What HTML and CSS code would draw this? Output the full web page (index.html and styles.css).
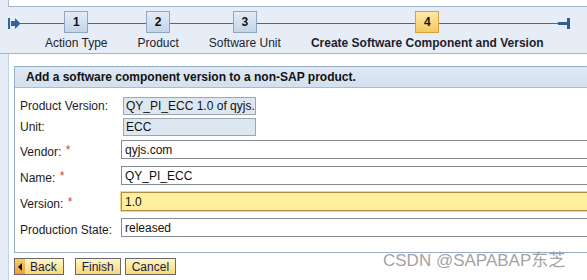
FILE: index.html
```html
<!DOCTYPE html>
<html lang="en">
<head>
    <meta charset="UTF-8">
    <title>Create Software Component and Version</title>
    <link rel="stylesheet" href="styles.css">
</head>
<body>
    <div class="top-strip"></div>

    <div class="roadmap">
        <span class="rm-start">
            <svg width="13" height="11" viewBox="0 0 13 11">
                <rect x="0" y="0" width="2" height="11" fill="#2f679c"/>
                <path d="M3 3 H7 V0 L12.5 5.5 L7 11 V8 H3 Z" fill="#2f679c"/>
            </svg>
        </span>
        <ol class="steps">
            <li class="step"><span class="step-num">1</span><span class="step-label">Action Type</span></li>
            <li class="step"><span class="step-num">2</span><span class="step-label">Product</span></li>
            <li class="step"><span class="step-num">3</span><span class="step-label">Software Unit</span></li>
            <li class="step current"><span class="step-num">4</span><span class="step-label">Create Software Component and Version</span></li>
        </ol>
        <span class="rm-end"></span>
    </div>

    <div class="main">
        <div class="panel">
            <div class="panel-head">Add a software component version to a non-SAP product.</div>
            <div class="form">
                <div class="row ro">
                    <label>Product Version:</label>
                    <span class="ro-box">QY_PI_ECC 1.0 of qyjs.</span>
                </div>
                <div class="row ro second">
                    <label>Unit:</label>
                    <span class="ro-box">ECC</span>
                </div>
                <div class="row edit first">
                    <label>Vendor: <span class="req">*</span></label>
                    <input class="field" type="text" value="qyjs.com">
                </div>
                <div class="row edit">
                    <label>Name: <span class="req">*</span></label>
                    <input class="field" type="text" value="QY_PI_ECC">
                </div>
                <div class="row edit">
                    <label>Version: <span class="req">*</span></label>
                    <input class="field focus" type="text" value="1.0">
                </div>
                <div class="row edit">
                    <label>Production State:</label>
                    <input class="field" type="text" value="released">
                </div>
            </div>
        </div>

        <div class="buttons">
            <button class="btn back"><span class="back-arrow"></span>Back</button>
            <button class="btn">Finish</button>
            <button class="btn">Cancel</button>
        </div>

        <div class="watermark">CSDN @SAPABAP东芝</div>
    </div>
</body>
</html>
```

FILE: styles.css
```css
html, body {
    height: 100%;
    overflow: hidden;
}
body {
    margin: 0;
    display: flex;
    flex-direction: column;
    font-family: 'Liberation Sans', Arial, 'Noto Sans CJK SC', sans-serif;
    font-size: 12px;
    color: #1c1c1c;
    background-color: #e6edf6;
}
.top-strip {
    height: 6px;
    margin-left: 8px;
    background-color: white;
    border-left: 1px solid #a9bdd3;
    border-bottom: 1px solid #9fb5cd;
}

/* roadmap */
.roadmap {
    position: relative;
    display: flex;
    align-items: flex-start;
    height: 46px;
    padding: 0 17px 0 8px;
    border-bottom: 1px solid #9fb5cd;
}
.roadmap::before {
    content: '';
    position: absolute;
    left: 20px;
    right: 22px;
    top: 16px;
    height: 1px;
    background-color: #3f6b97;
}
.rm-start {
    position: relative;
    margin-top: 11px;
    height: 11px;
}
.rm-start svg {
    display: block;
}
.steps {
    display: flex;
    gap: 30px;
    margin: 4px 0 0 24px;
    padding: 0;
    list-style: none;
}
.step {
    display: flex;
    flex-direction: column;
    align-items: center;
}
.step-num {
    position: relative;
    box-sizing: border-box;
    width: 24px;
    height: 22px;
    line-height: 20px;
    text-align: center;
    font-weight: bold;
    color: #111;
    background: linear-gradient(#e3ecf6, #c3d5e9);
    border: 1px solid #8da6c1;
}
.step-label {
    margin-top: 3px;
    line-height: 14px;
    white-space: nowrap;
    color: #1d1d2d;
}
.step.current .step-num {
    background: linear-gradient(#fdeaa8, #f6c862);
    border-color: #d9a136;
}
.step.current .step-label {
    font-weight: bold;
}
.rm-end {
    position: relative;
    display: flex;
    align-items: center;
    margin: 11px 0 0 auto;
    width: 12px;
    height: 11px;
}
.rm-end::before {
    content: '';
    width: 9px;
    height: 3px;
    background-color: #2f5f8f;
}
.rm-end::after {
    content: '';
    width: 3px;
    height: 11px;
    background-color: #2f5f8f;
}

/* main area */
.main {
    position: relative;
    flex: 1;
    margin-left: 8px;
    padding-top: 12px;
    overflow: hidden;
    background-color: white;
    border-left: 1px solid #c3d2e2;
}
.panel {
    margin-left: 5px;
    border: 1px solid #93afcc;
    border-right: none;
}
.panel-head {
    height: 20px;
    line-height: 20px;
    padding-left: 11px;
    font-weight: bold;
    color: #111;
    background: linear-gradient(#dfe8f3, #d3e0ee);
    border-bottom: 1px solid #a6bdd6;
}
.form {
    padding: 9px 0 15px 5px;
}
.row {
    display: flex;
}
.row label {
    width: 101px;
    flex-shrink: 0;
    white-space: nowrap;
}
.row.ro {
    align-items: center;
}
.row.ro.second {
    margin-top: 3px;
}
.row.edit {
    margin-top: 7px;
}
.row.edit.first {
    margin-top: 4px;
}
.row.edit label {
    padding-top: 5px;
    line-height: 14px;
}
.ro-box {
    box-sizing: border-box;
    width: 133px;
    height: 18px;
    line-height: 16px;
    margin-left: 2px;
    padding: 0 2px;
    white-space: nowrap;
    overflow: hidden;
    color: #111;
    background-color: #dde7f2;
    border: 1px solid #9ea7b1;
}
.req {
    position: relative;
    top: -2px;
    margin-left: 1px;
    color: #d33a3a;
}
.field {
    box-sizing: border-box;
    flex-shrink: 0;
    width: 500px;
    height: 19px;
    margin: 0;
    padding: 0 3px;
    font-family: inherit;
    font-size: 12px;
    color: #111;
    background-color: white;
    border: 1px solid #848b93;
    border-radius: 0;
    outline: none;
}
.field.focus {
    background-color: #fff0a0;
    border-color: #b48d43;
    box-shadow: 0 0 0 1px #f3d58c;
}

/* buttons */
.buttons {
    display: flex;
    gap: 4px;
    margin: 5px 0 0 5px;
}
.btn {
    display: flex;
    align-items: center;
    height: 17px;
    margin: 0;
    padding: 0 6px;
    font-family: inherit;
    font-size: 12px;
    color: #1b1b4b;
    background: linear-gradient(#fff6c8, #f7d874);
    border: 1px solid #696969;
    border-radius: 0;
}
.btn.back {
    margin-right: 7px;
    padding-left: 0;
}
.back-arrow {
    display: flex;
    align-items: center;
    justify-content: center;
    width: 10px;
    height: 100%;
    margin-right: 5px;
    background: linear-gradient(#f9cb6a, #eda03a);
}
.back-arrow::before {
    content: '';
    border-top: 4px solid transparent;
    border-bottom: 4px solid transparent;
    border-right: 4px solid #111;
}

.watermark {
    position: absolute;
    left: 374px;
    top: 198px;
    font-size: 17px;
    line-height: 18px;
    color: #a3a3a3;
    white-space: nowrap;
}
```
